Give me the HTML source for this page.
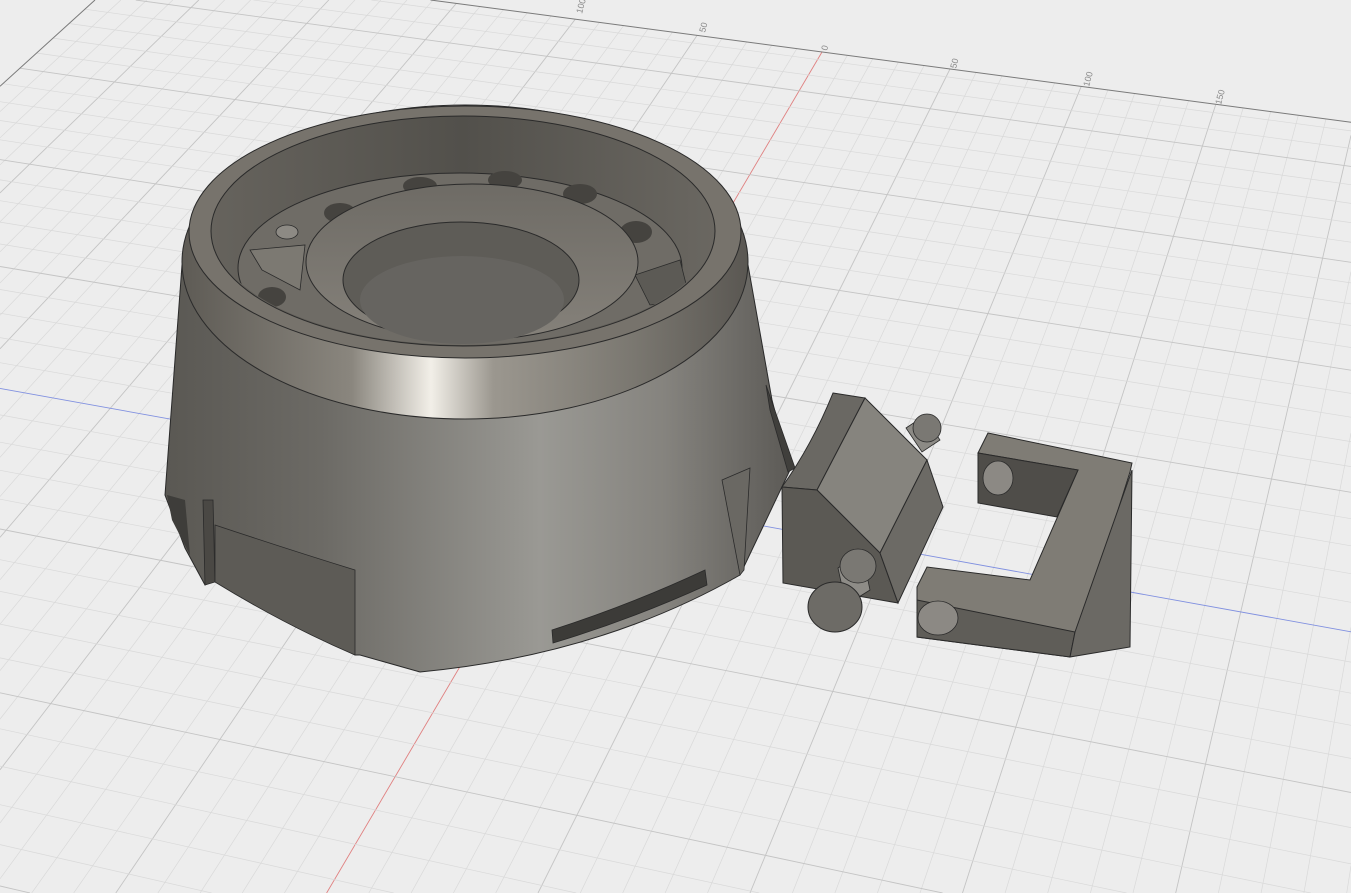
<!DOCTYPE html>
<html><head><meta charset="utf-8">
<style>
html,body{margin:0;padding:0;background:#ededed;overflow:hidden;width:1351px;height:893px}
svg{display:block}
text{font-family:"Liberation Sans",sans-serif;font-size:9px;fill:#8a8a8a}
</style></head>
<body>
<svg id="s" width="1351" height="893" viewBox="0 0 1351 893" xmlns="http://www.w3.org/2000/svg">
<defs>
<linearGradient id="body" x1="0" x2="1" y1="0" y2="0">
<stop offset="0" stop-color="#5a5853"/>
<stop offset="0.25" stop-color="#6c6a65"/>
<stop offset="0.6" stop-color="#9a9994"/>
<stop offset="0.8" stop-color="#85837e"/>
<stop offset="1" stop-color="#5c5a56"/>
</linearGradient>
<linearGradient id="band" x1="0" x2="1" y1="0" y2="0">
<stop offset="0" stop-color="#5e5b55"/>
<stop offset="0.3" stop-color="#8a867e"/>
<stop offset="0.44" stop-color="#f2efe8"/>
<stop offset="0.55" stop-color="#9b978f"/>
<stop offset="0.8" stop-color="#7a7770"/>
<stop offset="1" stop-color="#5a5752"/>
</linearGradient>
<linearGradient id="wall" x1="0" x2="1" y1="0" y2="0">
<stop offset="0" stop-color="#66635d"/>
<stop offset="0.5" stop-color="#52504b"/>
<stop offset="1" stop-color="#6a6761"/>
</linearGradient>
<linearGradient id="ring" x1="0" x2="0" y1="0" y2="1">
<stop offset="0" stop-color="#6e6b65"/>
<stop offset="1" stop-color="#85817a"/>
</linearGradient>
<clipPath id="cav"><ellipse cx="463" cy="231" rx="250" ry="114"/></clipPath>
</defs>
<g id="grid"></g>
<g id="lab">
<text transform="translate(582,14) rotate(-75)">100</text>
<text transform="translate(705,33) rotate(-75)">50</text>
<text transform="translate(827,51) rotate(-75)">0</text>
<text transform="translate(956,69) rotate(-75)">50</text>
<text transform="translate(1089,87) rotate(-75)">100</text>
<text transform="translate(1221,105) rotate(-75)">150</text>
</g>

<path d="M182,265 L165,495 L185,548 L205,585 L215,580 L355,655 L360,655 L420,672 Q600,655 740,575 L790,470 L772,400 L748,265 Z" fill="url(#body)" stroke="#2a2a2a" stroke-width="1"/>
<path d="M167,495 L185,500 L190,555 L172,520 Z" fill="#3e3d3a"/>
<path d="M203,500 L213,500 L215,582 L205,585 Z" fill="#4a4844" stroke="#2a2a2a" stroke-width="0.8"/>
<path d="M215,525 Q290,550 355,570 L355,655 Q285,625 215,582 Z" fill="#5d5b56" stroke="#2a2a2a" stroke-width="0.8"/>
<path d="M552,630 Q630,605 705,570 L707,585 Q630,620 553,643 Z" fill="#3c3b38" stroke="#2a2a2a" stroke-width="0.8"/>
<path d="M722,480 L750,468 L744,570 L740,575 Z" fill="#6a6863" stroke="#2a2a2a" stroke-width="0.8"/>
<path d="M766,385 L795,468 L788,472 L770,410 Z" fill="#403f3c" stroke="#2a2a2a" stroke-width="0.8"/>

<ellipse cx="465" cy="262" rx="283" ry="157" fill="url(#band)" stroke="#2a2a2a" stroke-width="1"/>
<ellipse cx="465" cy="232" rx="276" ry="126" fill="#77736c" stroke="#2a2a2a" stroke-width="1"/>
<ellipse cx="463" cy="231" rx="252" ry="115" fill="url(#wall)" stroke="#2a2a2a" stroke-width="1"/>
<g clip-path="url(#cav)">
<ellipse cx="460" cy="268" rx="222" ry="95" fill="#6f6c66" stroke="#2a2a2a" stroke-width="1"/>
<ellipse cx="340" cy="213" rx="16" ry="10" fill="#45433f"/>
<ellipse cx="420" cy="186" rx="17" ry="9" fill="#45433f"/>
<ellipse cx="505" cy="180" rx="17" ry="9" fill="#45433f"/>
<ellipse cx="580" cy="194" rx="17" ry="10" fill="#45433f"/>
<ellipse cx="636" cy="232" rx="16" ry="11" fill="#45433f"/>
<ellipse cx="272" cy="297" rx="14" ry="10" fill="#45433f"/>
<path d="M250,250 L305,245 L300,290 L262,270 Z" fill="#7c7972" stroke="#2a2a2a" stroke-width="0.8"/>
<path d="M635,275 L680,260 L690,300 L650,305 Z" fill="#5c5a55" stroke="#2a2a2a" stroke-width="0.8"/>
<ellipse cx="472" cy="262" rx="166" ry="78" fill="url(#ring)" stroke="#2a2a2a" stroke-width="1"/>
<ellipse cx="461" cy="280" rx="118" ry="58" fill="#5e5c57" stroke="#2a2a2a" stroke-width="1"/>
<ellipse cx="462" cy="300" rx="102" ry="44" fill="#666460"/>
<ellipse cx="287" cy="232" rx="11" ry="7" fill="#8d8a84" stroke="#2a2a2a" stroke-width="0.8"/>
</g>

<path d="M833,393 L865,398 L817,490 L782,487 Q812,445 833,393 Z" fill="#6a6863" stroke="#2a2a2a" stroke-width="1"/>
<path d="M865,398 L927,460 L880,553 L817,490 Z" fill="#86847e" stroke="#2a2a2a" stroke-width="1"/>
<path d="M782,487 L817,490 L880,553 L898,603 L783,583 Z" fill="#5b5954" stroke="#2a2a2a" stroke-width="1"/>
<path d="M927,460 L943,507 L898,603 L880,553 Z" fill="#6c6a65" stroke="#2a2a2a" stroke-width="1"/>
<path d="M906,428 L924,416 L940,440 L922,452 Z" fill="#8c8a85" stroke="#2a2a2a" stroke-width="0.8"/>
<ellipse cx="927" cy="428" rx="14" ry="14" fill="#7a7873" stroke="#2a2a2a" stroke-width="0.8"/>
<path d="M838,568 L862,552 L870,590 L846,605 Z" fill="#8e8c87" stroke="#2a2a2a" stroke-width="0.8"/>
<ellipse cx="858" cy="566" rx="18" ry="17" fill="#7a7873" stroke="#2a2a2a" stroke-width="0.8"/>
<ellipse cx="835" cy="607" rx="27" ry="25" fill="#6d6b66" stroke="#2a2a2a" stroke-width="1"/>

<path d="M988,433 L1132,463 L1130,472 L1078,637 L1070,657 L917,637 L917,587 L927,567 L1030,580 L1078,470 L978,453 Z" fill="#7f7c75" stroke="#2a2a2a" stroke-width="1"/>
<path d="M978,453 L1078,470 L1057,517 L978,503 Z" fill="#4f4d49" stroke="#2a2a2a" stroke-width="1"/>
<path d="M917,600 L1075,632 L1070,657 L917,637 Z" fill="#5f5d58" stroke="#2a2a2a" stroke-width="1"/>
<path d="M1075,632 L1132,470 L1130,647 L1070,657 Z" fill="#6b6964" stroke="#2a2a2a" stroke-width="1"/>
<ellipse cx="998" cy="478" rx="15" ry="17" fill="#8c8984" stroke="#2a2a2a" stroke-width="0.8"/>
<ellipse cx="938" cy="618" rx="20" ry="17" fill="#8c8984" stroke="#2a2a2a" stroke-width="0.8"/>
</svg>
<script>
(function(){
var src=[[0,225],[50,225],[0,0],[50,0]], dst=[[822,52],[950,69],[564,490],[725,519]];
var A=[],b=[];
for(var i=0;i<4;i++){var u=src[i][0],v=src[i][1],x=dst[i][0],y=dst[i][1];
A.push([u,v,1,0,0,0,-u*x,-v*x]);b.push(x);
A.push([0,0,0,u,v,1,-u*y,-v*y]);b.push(y);}
for(var c=0;c<8;c++){var p=c;for(var r=c+1;r<8;r++)if(Math.abs(A[r][c])>Math.abs(A[p][c]))p=r;
var t=A[c];A[c]=A[p];A[p]=t;t=b[c];b[c]=b[p];b[p]=t;
for(var r=0;r<8;r++){if(r==c)continue;var f=A[r][c]/A[c][c];for(var k=c;k<8;k++)A[r][k]-=f*A[c][k];b[r]-=f*b[c];}}
var h=[];for(var i=0;i<8;i++)h.push(b[i]/A[i][i]);
function P(u,v){var w=h[6]*u+h[7]*v+1;return [(h[0]*u+h[1]*v+h[2])/w,(h[3]*u+h[4]*v+h[5])/w,w];}
function inv(x,y){
 var a1=h[0]-h[6]*x,b1=h[1]-h[7]*x,c1=x-h[2];
 var a2=h[3]-h[6]*y,b2=h[4]-h[7]*y,c2=y-h[5];
 var det=a1*b2-a2*b1;return [(c1*b2-c2*b1)/det,(a1*c2-a2*c1)/det];}
var D=225,vmin=D;
while(vmin>-3000){var q=P(0,vmin-10);if(q[2]<0.1||q[1]>1000)break;vmin-=10;}
var uL=Math.round(inv(50,47)[0]/10)*10;
var W=1351,H=893;
function clip(a,bb){
 var x0=a[0],y0=a[1],dx=bb[0]-x0,dy=bb[1]-y0,t0=0,t1=1;
 var pp=[-dx,dx,-dy,dy],qq=[x0,W-x0,y0,H-y0];
 for(var i=0;i<4;i++){
  if(pp[i]==0){if(qq[i]<0)return null;}
  else{var r=qq[i]/pp[i];if(pp[i]<0){if(r>t1)return null;if(r>t0)t0=r;}else{if(r<t0)return null;if(r<t1)t1=r;}}
 }
 return [[x0+t0*dx,y0+t0*dy],[x0+t1*dx,y0+t1*dy]];}
var g=document.getElementById('grid'),out='';
function ln(a,bb,col,w){var c=clip(a,bb);if(!c)return;a=c[0];bb=c[1];
 out+='<line x1="'+a[0].toFixed(1)+'" y1="'+a[1].toFixed(1)+'" x2="'+bb[0].toFixed(1)+'" y2="'+bb[1].toFixed(1)+'" stroke="'+col+'" stroke-width="'+w+'"/>';}
var umax=2000;
for(var u=uL;u<=umax;u+=10){var m=(u%50==0);
 var col=m?'#c4c4c4':'#d9d9d9';
 if(u==0)col='#e08080';
 ln(P(u,D),P(u,vmin),col,m?0.9:0.7);}
for(var v=Math.floor(D/10)*10;v>=vmin;v-=10){var m=(v%50==0);
 var col=m?'#c4c4c4':'#d9d9d9';
 if(v==0)col='#8090e0';
 ln(P(uL,v),P(umax,v),col,m?0.9:0.7);}
ln(P(uL,D),P(umax,D),'#7a7a7a',1);
ln(P(uL,D),P(uL,vmin),'#7a7a7a',1);
g.innerHTML=out;
})();
</script>
</body></html>
